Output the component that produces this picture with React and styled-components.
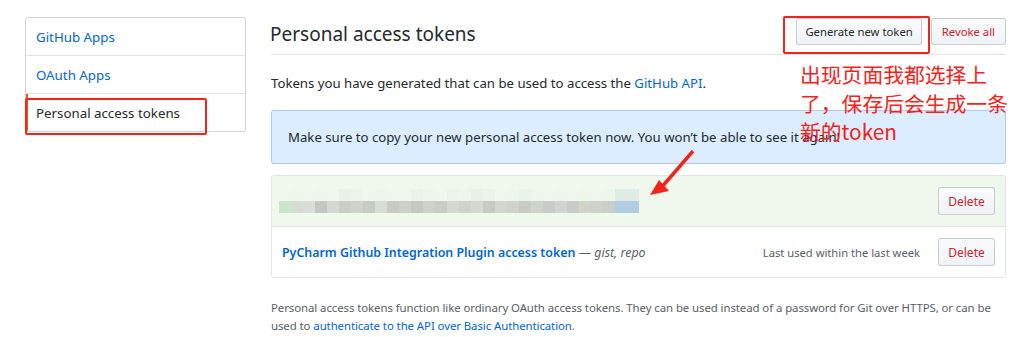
import React from 'react';
import styled, { createGlobalStyle } from 'styled-components';

const GlobalStyle = createGlobalStyle`
  body {
    margin: 0;
    background: #fff;
    font-family: "Noto Sans", "Open Sans", sans-serif;
    color: #24292e;
  }
`;

const mosaicTop = [
  '#f0f7ec', '#eef5ea', '#f0f7ec', '#eef5ea', '#f0f7ec', '#eaf1e6', '#ecf3e8', '#f0f7ec',
  '#eef5ea', '#f0f7ec', '#f0f7ec', '#ebf2e7', '#eef5ea', '#f0f7ec', '#ecf3e8', '#eef5ea',
  '#e9f0e6', '#ecf3e8', '#f0f7ec', '#eef5ea', '#ebf2e7', '#eef5ea', '#f0f7ec', '#eef5ea',
  '#f0f7ec', '#eef5ea', '#f0f7ec', '#eef5ea', '#e0ebe6', '#e0ebe6',
];
const mosaicBottom = [
  '#c9e6cb', '#d6dcd4', '#d8ddd6', '#c3c7c1', '#d3d9d0', '#c9cec7', '#cdd2cb', '#c6cbc3',
  '#d6ddd4', '#c6cbc3', '#cbd0c8', '#c3c8c1', '#ccd1ca', '#c8cec6', '#d3d9d1', '#cdd2cb',
  '#d3d9d0', '#c6cbc3', '#d0d6ce', '#cdd2ca', '#c9cbc2', '#cdd2ca', '#c8ccc6', '#cfd4cc',
  '#c8ccc6', '#d1d2c9', '#ccd1ca', '#c9cec7', '#b0cde3', '#b0cde3',
];

export default function App() {
  return (
    <>
      <GlobalStyle />
      <Page>
        <Sidebar>
          <MenuItem>GitHub Apps</MenuItem>
          <MenuItem>OAuth Apps</MenuItem>
          <MenuItem selected>
            Personal access tokens
            <Highlight />
          </MenuItem>
        </Sidebar>

        <Main>
          <Header>
            <Title>Personal access tokens</Title>
            <Actions>
              <ButtonWrap>
                <Button>Generate new token</Button>
                <ButtonHighlight />
              </ButtonWrap>
              <Button danger>Revoke all</Button>
            </Actions>
            <Note>
              出现页面我都选择上
              <br />
              了，保存后会生成一条
              <br />
              新的token
            </Note>
          </Header>

          <Lead>
            Tokens you have generated that can be used to access the <Link>GitHub API</Link>.
          </Lead>

          <Flash>Make sure to copy your new personal access token now. You won’t be able to see it again!</Flash>

          <TokenList>
            <TokenRow fresh>
              <Mosaic width="360" height="24" viewBox="0 0 360 24">
                {mosaicTop.map((c, i) => (
                  <rect key={'t' + i} x={i * 12} y="0" width="12" height="12" fill={c} />
                ))}
                {mosaicBottom.map((c, i) => (
                  <rect key={'b' + i} x={i * 12} y="12" width="12" height="12" fill={c} />
                ))}
              </Mosaic>
              <Arrow width="50" height="50" viewBox="0 0 50 50">
                <line x1="44" y1="1" x2="12" y2="38" stroke="#f5231c" strokeWidth="3.5" />
                <polygon points="1,45 10,30 20,41" fill="#f5231c" />
              </Arrow>
              <Spacer />
              <SmallButton>Delete</SmallButton>
            </TokenRow>
            <TokenRow>
              <TokenName>PyCharm Github Integration Plugin access token</TokenName>
              <Scopes>
                {' '}— <em>gist, repo</em>
              </Scopes>
              <Spacer />
              <LastUsed>Last used within the last week</LastUsed>
              <SmallButton>Delete</SmallButton>
            </TokenRow>
          </TokenList>

          <Footnote>
            Personal access tokens function like ordinary OAuth access tokens. They can be used instead of a password for Git over HTTPS, or can be used to{' '}
            <Link>authenticate to the API over Basic Authentication</Link>.
          </Footnote>
        </Main>
      </Page>
    </>
  );
}

const Page = styled.div`
  display: flex;
  align-items: flex-start;
  gap: 25px;
  padding: 17px 17px 0 25px;
  width: 1022px;
  box-sizing: border-box;
`;

const Sidebar = styled.nav`
  width: 221px;
  flex: none;
  border: 1px solid #d1d5da;
  border-radius: 3px;
  box-sizing: border-box;
`;

const MenuItem = styled.div`
  position: relative;
  box-sizing: border-box;
  height: ${p => (p.selected ? '37px' : '38px')};
  display: flex;
  align-items: center;
  font-size: 13.3px;
  color: ${p => (p.selected ? '#24292e' : '#0366d6')};
  border-bottom: ${p => (p.selected ? 'none' : '1px solid #e1e4e8')};
  border-left: ${p => (p.selected ? '2px solid #e36209' : 'none')};
  padding-left: ${p => (p.selected ? '8px' : '10px')};
`;

const Highlight = styled.span`
  position: absolute;
  left: -3px;
  top: 4px;
  width: 178px;
  height: 33px;
  border: 2px solid #f5231c;
  border-radius: 2px;
`;

const Main = styled.main`
  width: 735px;
  flex: none;
`;

const Header = styled.div`
  position: relative;
  display: flex;
  align-items: center;
  justify-content: space-between;
  height: 37px;
  border-bottom: 1px solid #e1e4e8;
`;

const Title = styled.h2`
  margin: 0 0 0 -1px;
  margin-top: -3px;
  font-size: 19px;
  font-weight: 400;
`;

const Actions = styled.div`
  display: flex;
  gap: 9px;
  align-items: center;
  margin-top: -8px;
`;

const ButtonWrap = styled.div`
  position: relative;
`;

const ButtonHighlight = styled.span`
  position: absolute;
  left: -13px;
  top: -2px;
  width: 143px;
  height: 34px;
  border: 2px solid #f5231c;
  border-radius: 2px;
`;

const Button = styled.button`
  height: 27px;
  padding: 0 ${p => (p.danger ? '10px' : '8px')};
  font-family: inherit;
  font-size: 11.3px;
  color: ${p => (p.danger ? '#cb2431' : '#24292e')};
  background: linear-gradient(#fafbfc, #eff3f6);
  border: 1px solid rgba(27, 31, 35, 0.2);
  border-radius: 3px;
`;

const Note = styled.div`
  position: absolute;
  left: 529px;
  top: 43px;
  z-index: 2;
  font-family: "Noto Sans CJK SC", "Noto Sans", sans-serif;
  font-size: 20.8px;
  line-height: 28.5px;
  color: #f5231c;
  white-space: nowrap;
`;

const Lead = styled.p`
  margin: 18px 0 17px;
  font-size: 13.2px;
  line-height: 20px;
`;

const Link = styled.a`
  color: #0366d6;
`;

const Flash = styled.div`
  height: 54px;
  box-sizing: border-box;
  display: flex;
  align-items: center;
  padding: 0 16px;
  font-size: 13.2px;
  background: #dbedff;
  border: 1px solid rgba(4, 66, 137, 0.2);
  border-radius: 3px;
`;

const TokenList = styled.div`
  margin-top: 11px;
  border: 1px solid #e1e4e8;
  border-radius: 3px;
`;

const TokenRow = styled.div`
  position: relative;
  display: flex;
  align-items: center;
  height: 50px;
  padding: 0 10px 0 11px;
  background: ${p => (p.fresh ? '#f0f7ec' : '#fff')};
  border-bottom: ${p => (p.fresh ? '1px solid #e1e4e8' : 'none')};
`;

const Mosaic = styled.svg`
  display: block;
  margin-left: -4px;
  margin-top: -1px;
`;

const Arrow = styled.svg`
  position: absolute;
  left: 377px;
  top: -26px;
  z-index: 2;
`;

const Spacer = styled.div`
  flex: 1;
`;

const SmallButton = styled.button`
  width: 57px;
  height: 28px;
  font-family: inherit;
  font-size: 12px;
  color: #cb2431;
  background: linear-gradient(#fafbfc, #eff3f6);
  border: 1px solid rgba(27, 31, 35, 0.2);
  border-radius: 3px;
`;

const TokenName = styled.span`
  margin-left: -1px;
  font-size: 12.4px;
  font-weight: 600;
  color: #0366d6;
`;

const Scopes = styled.span`
  font-size: 12.4px;
  color: #586069;
  white-space: pre;
`;

const LastUsed = styled.span`
  font-size: 11.2px;
  color: #586069;
  margin-right: 18px;
`;

const Footnote = styled.p`
  margin: 21px 0 0;
  font-size: 11.4px;
  letter-spacing: -0.07px;
  line-height: 18px;
  color: #586069;
`;
